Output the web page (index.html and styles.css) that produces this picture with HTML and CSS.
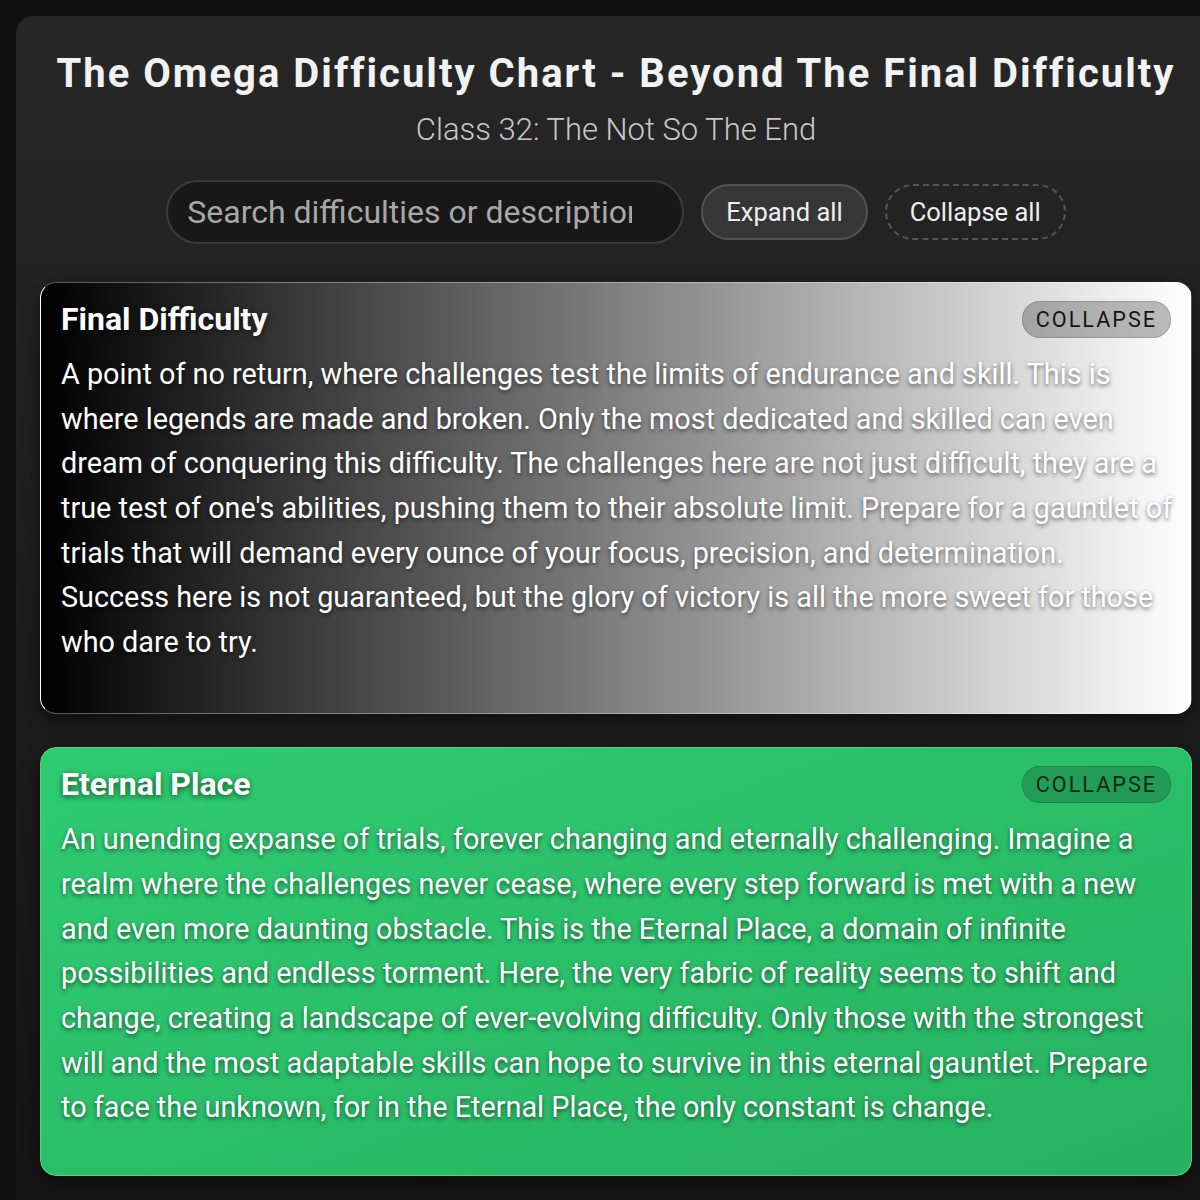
FILE: index.html
```html
<!DOCTYPE html>
<html lang="en">
<head>
    <meta charset="UTF-8">
    <meta name="viewport" content="width=device-width, initial-scale=1.0">
    <title>The Omega Difficulty Chart</title>
    <link rel="stylesheet" href="styles.css">
</head>
<body>
    <div class="container">
        <h1>The Omega Difficulty Chart - Beyond The Final Difficulty</h1>
        <p class="subtitle">Class 32: The Not So The End</p>

        <div class="controls">
            <input type="text" id="search" placeholder="Search difficulties or descriptions...">
            <button class="btn-expand">Expand all</button>
            <button class="btn-collapse">Collapse all</button>
        </div>

        <div class="card card-final">
            <div class="card-head">
                <h3>Final Difficulty</h3>
                <span class="toggle">Collapse</span>
            </div>
            <p>A point of no return, where challenges test the limits of endurance and skill. This is where legends are made and broken. Only the most dedicated and skilled can even dream of conquering this difficulty. The challenges here are not just difficult, they are a true test of one's abilities, pushing them to their absolute limit. Prepare for a gauntlet of trials that will demand every ounce of your focus, precision, and determination. Success here is not guaranteed, but the glory of victory is all the more sweet for those who dare to try.</p>
        </div>

        <div class="card card-eternal">
            <div class="card-head">
                <h3>Eternal Place</h3>
                <span class="toggle">Collapse</span>
            </div>
            <p>An unending expanse of trials, forever changing and eternally challenging. Imagine a realm where the challenges never cease, where every step forward is met with a new and even more daunting obstacle. This is the Eternal Place, a domain of infinite possibilities and endless torment. Here, the very fabric of reality seems to shift and change, creating a landscape of ever-evolving difficulty. Only those with the strongest will and the most adaptable skills can hope to survive in this eternal gauntlet. Prepare to face the unknown, for in the Eternal Place, the only constant is change.</p>
        </div>
    </div>
</body>
</html>
```

FILE: styles.css
```css
body {
    font-family: Roboto, 'Liberation Sans', sans-serif;
    background-color: #111;
    margin: 0;
    padding: 16px;
    color: #eee;
}

.container {
    width: 1200px;
    box-sizing: border-box;
    padding: 24px 24px 40px;
    border-radius: 18px;
    background: linear-gradient(180deg, #272727 0%, #1c1c1c 50%, #141414 100%);
}

h1 {
    text-align: center;
    font-size: 40px;
    font-weight: 700;
    letter-spacing: 2px;
    color: #f2f2f2;
    margin: 10px 0 14px;
}

.subtitle {
    text-align: center;
    font-size: 31px;
    font-weight: 300;
    color: #c8c8c8;
    margin: 0 0 32px;
}

.controls {
    display: flex;
    justify-content: center;
    align-items: center;
    gap: 17px;
    margin-bottom: 38px;
}

#search {
    width: 518px;
    height: 64px;
    box-sizing: border-box;
    padding: 0 50px 0 19px;
    font-family: inherit;
    font-size: 32px;
    color: #eee;
    background-color: #181818;
    border: 2px solid #3c3c3c;
    border-radius: 32px;
    outline: none;
}

#search::placeholder {
    color: #a8a8a8;
}

.controls button {
    height: 56px;
    box-sizing: border-box;
    padding: 0 23px;
    font-family: inherit;
    font-size: 25.5px;
    color: #eee;
    border-radius: 28px;
    cursor: pointer;
}

.btn-expand {
    background-color: #363636;
    border: 2px solid #555;
}

.btn-collapse {
    background-color: transparent;
    border: 2px dashed #555;
}

.card {
    border-radius: 16px;
    padding: 17px 18px 47px 20px;
    margin-bottom: 33px;
    box-shadow: 0 6px 18px rgba(0, 0, 0, 0.45);
    color: #fff;
}

.card-final {
    background: linear-gradient(90deg, #000 0%, #fff 100%);
    border: 1px solid rgba(255, 255, 255, 0.35);
    border-left-color: #fff;
    margin-top: 1px;
    padding-bottom: 49px;
}

.card-eternal {
    background: linear-gradient(160deg, #2ecc71 0%, #27b161 100%);
    border: 1px solid #4fd486;
    padding-bottom: 45px;
}

.card-head {
    display: flex;
    justify-content: space-between;
    align-items: center;
}

.card h3 {
    margin: 0;
    font-size: 32px;
    font-weight: 700;
    text-shadow: 0 2px 6px rgba(0, 0, 0, 0.6);
}

.toggle {
    font-size: 21.6px;
    letter-spacing: 2px;
    text-transform: uppercase;
    color: #151515;
    padding: 5px 13px;
    margin-right: 2px;
    border-radius: 18px;
    background-color: rgba(0, 0, 0, 0.25);
    border: 1px solid rgba(0, 0, 0, 0.15);
}

.card-eternal .toggle {
    color: #0c2a18;
    background-color: rgba(0, 0, 0, 0.18);
}

.card p {
    margin: 14px 0 0;
    font-size: 28.8px;
    line-height: 1.55;
    text-shadow: 0 2px 4px rgba(0, 0, 0, 0.55);
}
```
